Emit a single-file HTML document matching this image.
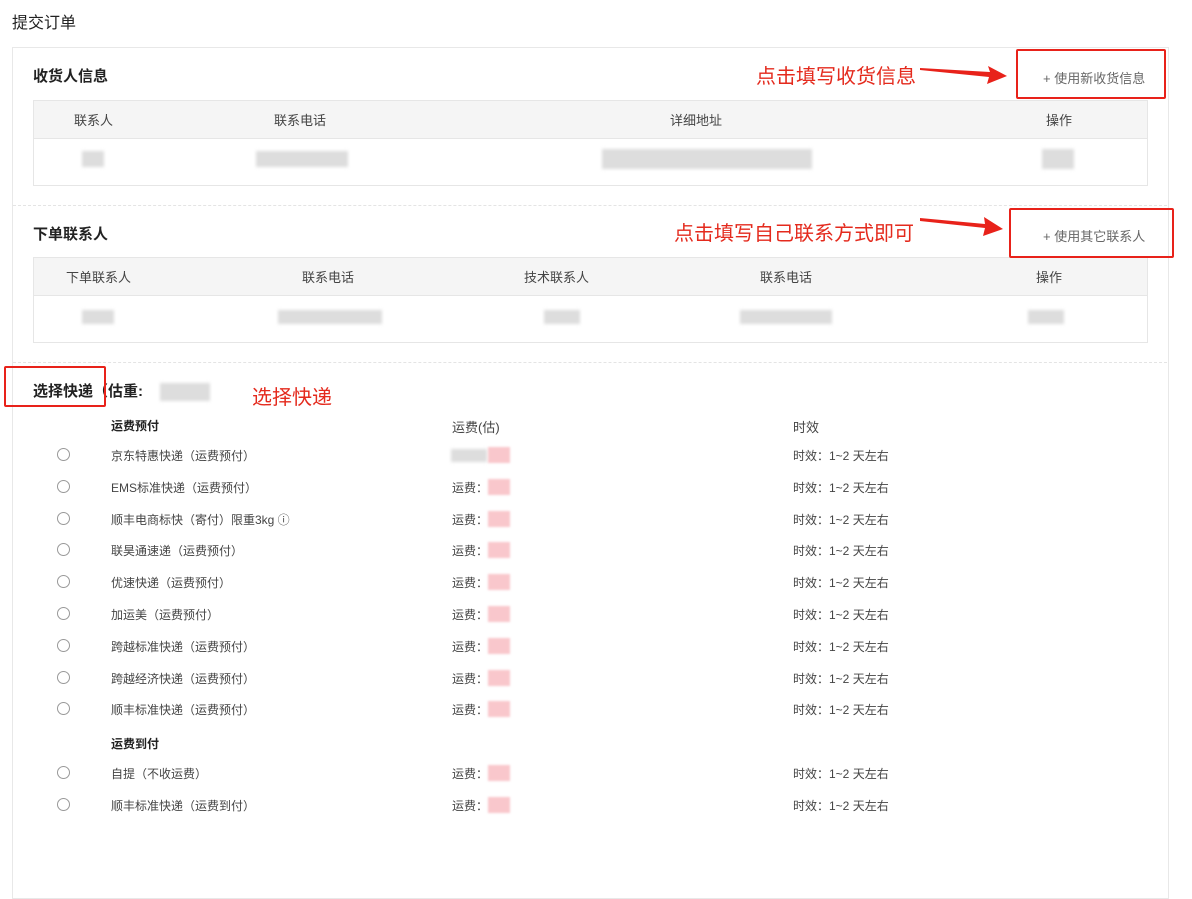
<!DOCTYPE html><html><head><meta charset="utf-8"><style>
body{margin:0;width:1192px;height:821px;overflow:hidden;background:#fff;font-family:"Liberation Sans","Noto Sans CJK SC",sans-serif;color:#333;position:relative}
.a{position:absolute;white-space:nowrap}
.panel{position:absolute;left:12px;top:47px;width:1155px;height:850px;border:1px solid #e8e8e8}
.tbl{position:absolute;left:33px;width:1113px;border:1px solid #e6e6e6}
.th{height:37px;background:#f5f5f5;border-bottom:1px solid #e6e6e6;position:relative}
.td{height:46px;position:relative}
.t{font-size:13px;color:#444}
.h{font-size:15px;font-weight:bold;color:#222}
.red{color:#e42a1d;font-size:20px}
.box{position:absolute;border:2px solid #e8221a;border-radius:2px}
.blur{position:absolute;background:#ddd;filter:blur(1.5px)}
.pk{position:absolute;background:#f9c7cc;filter:blur(1px)}
.dash{position:absolute;left:13px;width:1154px;border-top:1px dashed #e4e4e4}
.r{position:absolute;left:57px;width:11px;height:11px;border:1px solid #999;border-radius:50%}
.s{font-size:12px;color:#444}
</style></head><body>
<div class="a" style="left:12px;top:9px;font-size:16px;color:#222">提交订单</div>
<div class="panel"></div>
<div class="a h" style="left:33px;top:65px">收货人信息</div>
<div class="tbl" style="top:100px"><div class="th">
<span class="a t" style="left:40px;top:9px">联系人</span><span class="a t" style="left:240px;top:9px">联系电话</span><span class="a t" style="left:636px;top:9px">详细地址</span><span class="a t" style="left:1012px;top:9px">操作</span></div>
<div class="td"><div class="blur" style="left:48px;top:12px;width:22px;height:16px"></div><div class="blur" style="left:222px;top:12px;width:92px;height:16px"></div><div class="blur" style="left:568px;top:10px;width:210px;height:20px"></div><div class="blur" style="left:1008px;top:10px;width:32px;height:20px"></div></div></div>
<div class="a s" style="left:1043px;top:68px;color:#666;font-size:13px">+ 使用新收货信息</div>
<div class="box" style="left:1016px;top:49px;width:146px;height:46px"></div>
<div class="a red" style="left:756px;top:60px">点击填写收货信息</div>
<svg class="a" style="left:915px;top:60px" width="100" height="30"><polygon points="5,8 75,12 73,6 92,16 72,24 74,17 5,10" fill="#e8221a"/></svg>
<div class="dash" style="top:205px"></div>
<div class="a h" style="left:33px;top:223px">下单联系人</div>
<div class="tbl" style="top:257px"><div class="th">
<span class="a t" style="left:32px;top:9px">下单联系人</span><span class="a t" style="left:268px;top:9px">联系电话</span><span class="a t" style="left:490px;top:9px">技术联系人</span><span class="a t" style="left:726px;top:9px">联系电话</span><span class="a t" style="left:1002px;top:9px">操作</span></div>
<div class="td"><div class="blur" style="left:48px;top:14px;width:32px;height:14px"></div><div class="blur" style="left:244px;top:14px;width:104px;height:14px"></div><div class="blur" style="left:510px;top:14px;width:36px;height:14px"></div><div class="blur" style="left:706px;top:14px;width:92px;height:14px"></div><div class="blur" style="left:994px;top:14px;width:36px;height:14px"></div></div></div>
<div class="a s" style="left:1043px;top:226px;color:#666;font-size:13px">+ 使用其它联系人</div>
<div class="box" style="left:1009px;top:208px;width:161px;height:46px"></div>
<div class="a red" style="left:674px;top:217px">点击填写自己联系方式即可</div>
<svg class="a" style="left:915px;top:212px" width="100" height="30"><polygon points="5,6 70,12 69,5 88,17 68,24 70,16 5,9" fill="#e8221a"/></svg>
<div class="dash" style="top:362px"></div>
<div class="a h" style="left:33px;top:380px">选择快递（估重:</div>
<div class="blur" style="left:160px;top:383px;width:50px;height:18px"></div>
<div class="box" style="left:4px;top:366px;width:98px;height:37px"></div>
<div class="a red" style="left:252px;top:381px">选择快递</div>
<div class="a s" style="left:111px;top:417px;font-weight:bold;color:#222">运费预付</div>
<div class="a s" style="left:452px;top:417px;font-size:13px">运费(估)</div>
<div class="a s" style="left:793px;top:417px;font-size:13px">时效</div>
<div class="a s" style="left:111px;top:735px;font-weight:bold;color:#222">运费到付</div>
<div id="rows"></div>
<script>
var n=["京东特惠快递（运费预付）","EMS标准快递（运费预付）","顺丰电商标快（寄付）限重3kg ⓘ","联昊通速递（运费预付）","优速快递（运费预付）","加运美（运费预付）","跨越标准快递（运费预付）","跨越经济快递（运费预付）","顺丰标准快递（运费预付）","","自提（不收运费）","顺丰标准快递（运费到付）"];
var h="";for(var i=0;i<n.length;i++){if(!n[i])continue;var y=455+i*31.8;
h+='<div class="r" style="top:'+(y-7)+'px"></div><div class="a s" style="left:111px;top:'+(y-8)+'px">'+n[i]+'</div>';
h+=(i==0?'<div class="blur" style="left:451px;top:'+(y-6)+'px;width:36px;height:13px"></div>':'<div class="a s" style="left:452px;top:'+(y-8)+'px">运费：</div>');
h+='<div class="pk" style="left:488px;top:'+(y-8)+'px;width:22px;height:16px"></div>';
h+='<div class="a s" style="left:793px;top:'+(y-8)+'px">时效：1~2 天左右</div>';}
document.getElementById("rows").innerHTML=h;
</script>
</body></html>
